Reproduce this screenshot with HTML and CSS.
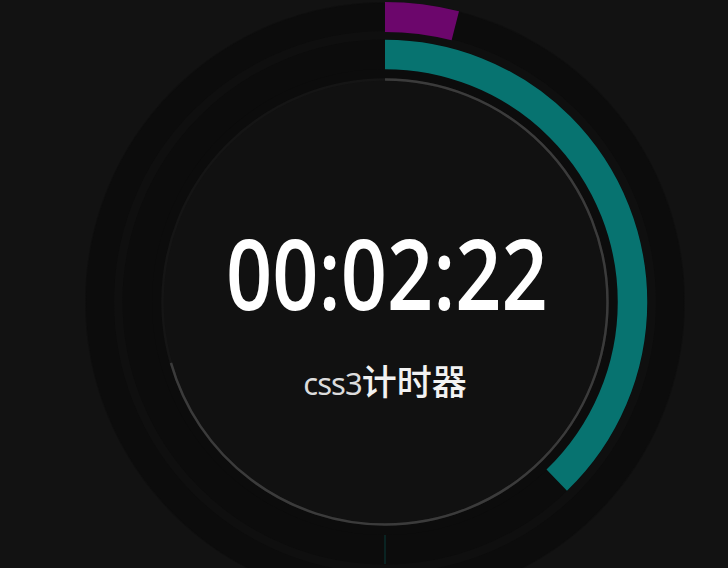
FILE: index.html
```html
<!DOCTYPE html>
<html lang="zh">
<head>
<meta charset="utf-8">
<title>css3计时器</title>
<link rel="stylesheet" href="styles.css">
</head>
<body>
<div class="stage">
  <div class="clock">
    <svg class="dial" width="600" height="600" viewBox="0 0 600 600">
      <circle cx="300" cy="300" r="300" fill="#0f0f0f"/>
      <circle cx="300" cy="300" r="285" fill="none" stroke="#0c0c0c" stroke-width="28"/>
      <circle cx="300" cy="300" r="247.5" fill="none" stroke="#0c0c0c" stroke-width="30"/>
      <circle cx="300" cy="300" r="228" fill="none" stroke="#0c0c0c" stroke-width="10"/>
      <circle cx="300" cy="300" r="223" fill="#111111"/>
      <circle cx="300" cy="300" r="222.5" fill="none" stroke="#151515" stroke-width="2.5"/>
      <g transform="rotate(-90 300 300)">
        <circle cx="300" cy="300" r="285" fill="none" stroke="#6c066c" stroke-width="30" stroke-dasharray="71.1 2000"/>
        <circle cx="300" cy="300" r="247.5" fill="none" stroke="#077370" stroke-width="29.5" stroke-dasharray="587.5 2000"/>
        <circle cx="300" cy="300" r="222.5" fill="none" stroke="#3b3b3b" stroke-width="2.5" stroke-dasharray="986.5 2000"/>
      </g>
      <line x1="300" y1="533" x2="300" y2="562" stroke="#077370" stroke-opacity="0.45" stroke-width="1"/>
    </svg>
    <div class="readout">
      <div class="time">00:02:22</div>
      <div class="label"><span class="latin">css3</span>计时器</div>
    </div>
  </div>
</div>
</body>
</html>
```
FILE: styles.css
```css
html, body {
  margin: 0;
  padding: 0;
  background: #121212;
  overflow: hidden;
}
body {
  width: 728px;
  height: 568px;
}
.stage {
  height: 566px;
  overflow: hidden;
  padding: 2px 0 0 85px;
}
.clock {
  display: grid;
  width: 600px;
  height: 600px;
}
.dial {
  grid-area: 1 / 1;
  display: block;
}
.readout {
  grid-area: 1 / 1;
  display: flex;
  flex-direction: column;
  align-items: center;
  padding-top: 221px;
}
.time {
  font-family: "Open Sans", "Noto Sans", sans-serif;
  font-size: 98px;
  font-weight: 600;
  line-height: 1;
  color: #ffffff;
  transform: scaleX(0.825);
  margin-left: 4px;
}
.label {
  margin-top: 43px;
  font-family: "Noto Sans", "Noto Sans CJK SC", sans-serif;
  font-size: 35px;
  font-weight: 500;
  line-height: 1;
  color: #f2f2f2;
}
.latin {
  font-size: 31px;
  font-weight: 400;
  letter-spacing: -1px;
  color: #dcdcdc;
}
```
